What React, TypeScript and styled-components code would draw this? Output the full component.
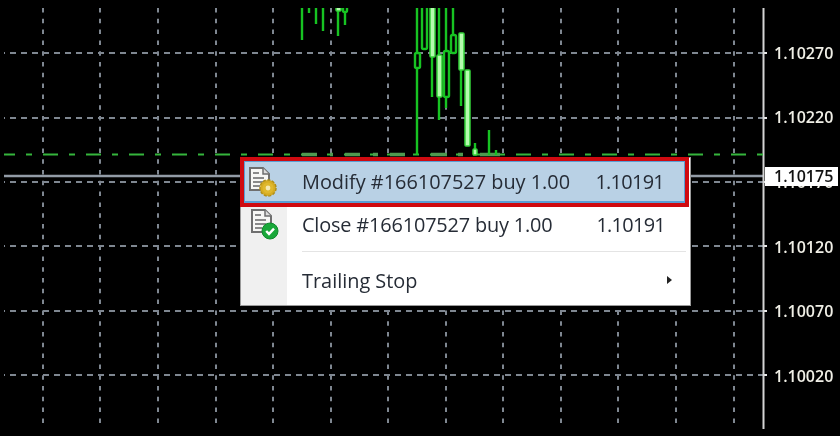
import * as React from 'react';
import styled, { createGlobalStyle } from 'styled-components';

const GlobalStyle = createGlobalStyle`
  html, body {
    margin: 0;
    padding: 0;
    background: #000;
  }
`;

const Page = styled.div`
  width: 840px;
  height: 436px;
  background: #000;
  display: flex;
  position: relative;
  overflow: hidden;
  filter: blur(0.55px);
`;
const ChartSvg = styled.svg`
  width: 767px;
  height: 436px;
  flex: none;
  display: block;
`;
const Axis = styled.div`
  flex: 1;
  padding: 20.6px 0 0 7px;
  display: flex;
  flex-direction: column;
  font-family: 'Open Sans', sans-serif;
  font-size: 16px;
  font-weight: 600;
  color: #f0efe6;
`;
const AxisLabel = styled.div`
  height: 64.7px;
  line-height: 64.7px;
`;
const AxisCutLabel = styled.div`
  margin-top: 17px;
  height: 2px;
  line-height: 22px;
  overflow: hidden;
`;
const PriceTag = styled.div`
  position: absolute;
  left: 765px;
  top: 167px;
  width: 73px;
  height: 19px;
  padding-left: 9px;
  box-sizing: border-box;
  background: #fff;
  color: #111;
  font-family: 'Open Sans', sans-serif;
  font-size: 16px;
  font-weight: 600;
  line-height: 19px;
`;
const Menu = styled.div`
  position: absolute;
  left: 240px;
  top: 157px;
  width: 451px;
  height: 149px;
  box-sizing: border-box;
  border: 1px solid #9a9a9a;
  background: linear-gradient(to right, #f0f0f0 46px, #fff 46px);
  display: flex;
  flex-direction: column;
  font-family: 'Open Sans', sans-serif;
  font-size: 19.9px;
  color: #262c36;
`;
const RedFrame = styled.div`
  margin: -1px 1px 0 -1px;
  height: 50px;
  box-sizing: border-box;
  border: 4px solid #cf0a10;
  display: flex;
`;
const Row = styled.div<{ $selected?: boolean }>`
  flex: ${p => (p.$selected ? '1' : 'none')};
  display: flex;
  align-items: center;
  box-sizing: border-box;
  height: ${p => (p.$selected ? 'auto' : '34px')};
  padding-left: ${p => (p.$selected ? '0' : '4px')};
  padding-right: ${p => (p.$selected ? '20px' : '25px')};
  background: ${p => (p.$selected ? '#b9d1e5' : 'transparent')};
  border: ${p => (p.$selected ? '1px solid #5a9fd6' : 'none')};
  border-bottom-width: ${p => (p.$selected ? '2px' : '0')};
`;
const IconSlot = styled.div<{ $shift?: number }>`
  width: 57px;
  flex: none;
  display: flex;
  padding-left: ${p => p.$shift ?? 3}px;
  box-sizing: border-box;
`;
const RowLabel = styled.span<{ $tight?: boolean }>`
  flex: 1;
  letter-spacing: ${p => (p.$tight ? '-0.16px' : '0')};
`;
const RowPrice = styled.span`
  flex: none;
  letter-spacing: -0.7px;
`;
const Separator = styled.div`
  height: 1px;
  margin: 10px 4px 11px 61px;
  background: #e4e4e4;
`;
const Arrow = styled.span`
  width: 0;
  height: 0;
  margin-right: -7px;
  border-left: 5px solid #222;
  border-top: 4.5px solid transparent;
  border-bottom: 4.5px solid transparent;
`;

const H_LINES = [53, 118, 182, 246, 311, 375];
const V_LINES = [43, 100, 158, 216, 273, 331, 388, 446, 503, 561, 618, 676, 734];
const LABELS = ['1.10270', '1.10220', '1.10170', '1.10120', '1.10070', '1.10020'];
const BASE_PATCHES: [number, number][] = [
  [302, 317], [330, 333], [345, 360], [373, 378], [390, 405], [431, 447], [458, 463], [480, 500]
];
// x, wick top, wick bottom
const WICKS = [
  [302, 8, 40], [309, 8, 13], [316, 8, 24], [323, 8, 31], [338, 8, 36], [345, 8, 25],
  [417, 8, 155], [432, 57, 97], [439, 8, 120], [446, 8, 108], [453, 8, 35], [461, 70, 106],
  [475, 143, 155], [489, 130, 155], [496, 150, 155]
];
// x, width, top, bottom
const HOLLOW = [
  [415, 5, 53, 68], [422, 5, 4, 49], [444, 5, 51, 97], [451, 5, 35, 53], [343, 4, 4, 12]
];
const FILLED = [
  [336, 5, 4, 11], [430, 5, 4, 57], [437, 5, 55, 97], [459, 5, 33, 70], [465, 5, 70, 146], [473, 4, 149, 155]
];

const DocIcon = ({ badge }: { badge: 'gear' | 'check' }) => (
  <svg width="32" height="32" viewBox="0 0 32 32">
    <path d="M2 2h13l6 6v16H2z" fill="#f7f7f5" stroke="#6f6f6f" strokeWidth="2" />
    <path d="M15 2v6h6" fill="#ddd" stroke="#6f6f6f" strokeWidth="1.5" />
    <path d="M5 7h6M5 12h11M5 16h11M5 20h7" stroke="#8a8a8a" strokeWidth="2" />
    {badge === 'gear' ? (
      <g>
        <circle cx="20" cy="22" r="8" fill="#d6ac22" stroke="#b08f1a" strokeWidth="1.5" strokeDasharray="3 1.6" />
        <circle cx="20" cy="22" r="5.5" fill="#dfb82e" />
        <circle cx="20" cy="22" r="2.4" fill="#f4e9b4" />
      </g>
    ) : (
      <g>
        <circle cx="20" cy="23" r="8" fill="#19a83a" stroke="#0f8a2c" strokeWidth="1" />
        <path d="M16.2 23l2.8 2.9 5-5.2" fill="none" stroke="#fff" strokeWidth="2.4" />
      </g>
    )}
  </svg>
);

const Chart = () => (
  <ChartSvg viewBox="0 0 767 436">
    <g stroke="#7f8791" strokeWidth="2">
      {H_LINES.map(y => (
        <line key={y} x1="4" x2="763" y1={y} y2={y} strokeDasharray="6 5" strokeDashoffset="5" />
      ))}
      {V_LINES.map(x => (
        <line key={x} x1={x} x2={x} y1="8" y2="428" strokeDasharray="4.5 6.3" />
      ))}
    </g>
    <g stroke="#e8e8e8" strokeWidth="2">
      {H_LINES.map(y => (
        <line key={y} x1="763" x2="767" y1={y} y2={y} />
      ))}
    </g>
    <line x1="4" x2="763" y1="176" y2="176" stroke="#929ba6" strokeWidth="2.4" />
    <line x1="763.5" x2="763.5" y1="8" y2="429" stroke="#d4d4d4" strokeWidth="2" />
    <line
      x1="4"
      x2="763"
      y1="154.5"
      y2="154.5"
      stroke="#35b53c"
      strokeWidth="2"
      strokeDasharray="15 11 6 11"
      strokeDashoffset="4"
    />
    <g stroke="#4f9a50" strokeWidth="3.5">
      {BASE_PATCHES.map(([a, b]) => (
        <line key={a} x1={a} x2={b} y1="154.5" y2="154.5" />
      ))}
    </g>
    <g stroke="#17c322" strokeWidth="2.4">
      {WICKS.map(([x, a, b]) => (
        <line key={`${x}-${a}`} x1={x} x2={x} y1={a} y2={b} />
      ))}
      {HOLLOW.map(([x, w, a, b]) => (
        <rect key={x} x={x} y={a} width={w} height={b - a} rx="1.5" fill="#000" />
      ))}
    </g>
    <g fill="#b5fbae" stroke="#35d23a" strokeWidth="1.5">
      {FILLED.map(([x, w, a, b]) => (
        <rect key={x} x={x} y={a} width={w} height={b - a} rx="1" />
      ))}
    </g>
    <rect x="290" y="0" width="200" height="8" fill="#000" />
  </ChartSvg>
);

export default function App() {
  return (
    <Page>
      <GlobalStyle />
      <Chart />
      <Axis>
        {LABELS.map(l => (
          <AxisLabel key={l}>{l}</AxisLabel>
        ))}
        <AxisCutLabel>1.09970</AxisCutLabel>
      </Axis>
      <PriceTag>1.10175</PriceTag>
      <Menu>
        <RedFrame>
          <Row $selected>
            <IconSlot>
              <DocIcon badge="gear" />
            </IconSlot>
            <RowLabel>Modify #166107527 buy 1.00</RowLabel>
            <RowPrice>1.10191</RowPrice>
          </Row>
        </RedFrame>
        <Row>
          <IconSlot $shift={5}>
            <DocIcon badge="check" />
          </IconSlot>
          <RowLabel $tight>Close #166107527 buy 1.00</RowLabel>
          <RowPrice>1.10191</RowPrice>
        </Row>
        <Separator />
        <Row>
          <IconSlot />
          <RowLabel>Trailing Stop</RowLabel>
          <Arrow />
        </Row>
      </Menu>
    </Page>
  );
}
